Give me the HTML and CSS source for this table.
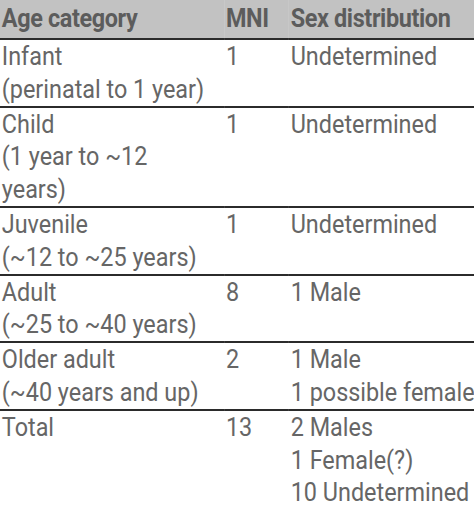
FILE: index.html
```html
<!DOCTYPE html>
<html>
<head>
<meta charset="utf-8">
<link rel="stylesheet" href="styles.css">
</head>
<body>
<div class="frame">
<div class="sheet">
<table class="tbl">
<thead>
<tr><th class="c1">Age category</th><th class="c2">MNI</th><th class="c3">Sex distribution</th></tr>
</thead>
<tbody>
<tr><td>Infant<br>(perinatal to 1 year)</td><td>1</td><td>Undetermined</td></tr>
<tr><td>Child<br>(1 year to ~12<br>years)</td><td>1</td><td>Undetermined</td></tr>
<tr><td>Juvenile<br>(~12 to ~25 years)</td><td>1</td><td>Undetermined</td></tr>
<tr><td>Adult<br>(~25 to ~40 years)</td><td>8</td><td>1 Male</td></tr>
<tr><td>Older adult<br>(~40 years and up)</td><td>2</td><td>1 Male<br>1 possible female</td></tr>
<tr><td>Total</td><td>13</td><td>2 Males<br>1 Female(?)<br>10 Undetermined</td></tr>
</tbody>
</table>
</div>
</div>
</body>
</html>
```
FILE: styles.css
```css
html, body { margin: 0; padding: 0; background: #fff; overflow: hidden; }
.frame { width: 474px; height: 508px; overflow: hidden; }
.sheet { width: 527px; transform: scaleX(0.9); transform-origin: 0 0; }
.tbl {
  border-collapse: collapse;
  table-layout: fixed;
  width: 527px;
  font-family: Roboto, "Liberation Sans", sans-serif;
  font-size: 26px;
  line-height: 32.8px;
  color: #666;
}
.tbl th, .tbl td {
  box-sizing: border-box;
  padding: 0 0 0 2px;
  text-align: left;
  vertical-align: top;
  white-space: nowrap;
}
.tbl thead th {
  background: #c2c2c2;
  color: #5c5c5c;
  font-weight: 700;
  letter-spacing: -0.4px;
  height: 39px;
  padding-top: 2px;
  border-bottom: 2px solid #2b2b2b;
}
.tbl tbody tr { border-bottom: 2px solid #2b2b2b; }
.tbl tbody tr:last-child { border-bottom: none; }
.c1 { width: 249px; }
.c2 { width: 72px; }
.c3 { width: 206px; }
```
